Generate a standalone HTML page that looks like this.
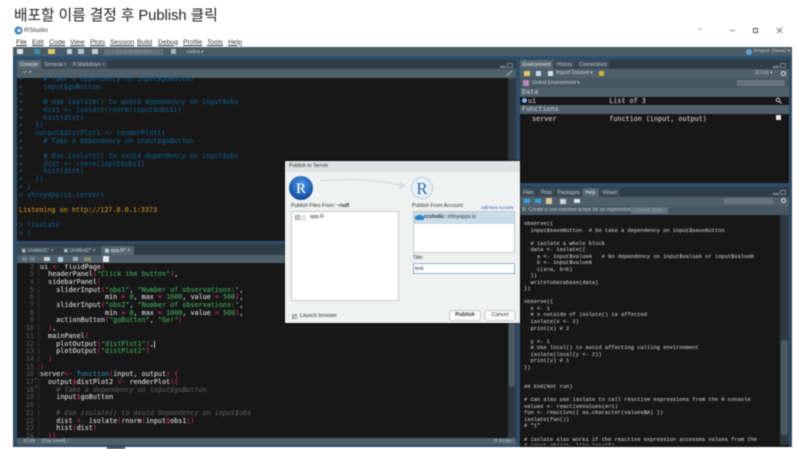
<!DOCTYPE html>
<html lang="ko"><head><meta charset="utf-8"><title>배포할 이름 결정 후 Publish 클릭</title>
<style>
*{margin:0;padding:0;box-sizing:border-box}
html,body{width:800px;height:449px;overflow:hidden;background:#fff}
#r{position:absolute;left:0;top:0;width:800px;height:449px;overflow:hidden;filter:blur(.4px);font-family:"Liberation Sans",sans-serif}
#r div,#r span.a,#r pre,#r svg{position:absolute}
pre{font-family:"DejaVu Sans Mono","Liberation Mono",monospace;font-size:6.75px;line-height:7.7px;white-space:pre;-webkit-text-stroke:.12px currentColor}
.t{font-size:5.5px;color:#c9d0d4;white-space:nowrap}
.m{font-size:6.8px;color:#333;top:38.5px;white-space:nowrap;text-decoration:underline;text-decoration-thickness:.3px}
.tab{top:0;height:9px;background:#3a4a55;font-size:5px;color:#c3cbd0;line-height:10px;text-align:center;white-space:nowrap}
.on{background:#55666f;color:#e4e8ea}
.st{color:#3fa45a}.fn{color:#2a89a8}.b{color:#c42b6a}.c{color:#5a5a5a;font-style:italic}.o{color:#c42b6a}
</style></head><body><div id="r">
<div style="left:14px;top:6px;font:14.7px/20px 'Liberation Sans','Noto Sans CJK KR',sans-serif;color:#222;white-space:nowrap">배포할 이름 결정 후 Publish 클릭</div>
<svg style="left:14px;top:26px" width="9" height="9"><circle cx="4.5" cy="4.5" r="4" fill="#3d82c4"/><circle cx="5" cy="4.5" r="1.7" fill="#dfeaf4"/></svg>
<div style="left:24px;top:26px;font-size:6.7px;line-height:9px;color:#444">RStudio</div>
<div class="m" style="left:16px">File</div><div class="m" style="left:32px">Edit</div><div class="m" style="left:49px">Code</div><div class="m" style="left:70px">View</div><div class="m" style="left:90px">Plots</div><div class="m" style="left:110px">Session</div><div class="m" style="left:137px">Build</div><div class="m" style="left:158px">Debug</div><div class="m" style="left:183px">Profile</div><div class="m" style="left:207px">Tools</div><div class="m" style="left:228px">Help</div>
<div style="left:697px;top:26px;font-size:6px;line-height:7px;color:#333">↔</div>
<div style="left:730px;top:29.5px;width:5px;height:1px;background:#888"></div>
<div style="left:753px;top:28px;width:5px;height:5px;border:1px solid #555"></div>
<svg style="left:776px;top:27px" width="7" height="7"><path d="M1 1L6 6M6 1L1 6" stroke="#555" stroke-width=".8"/></svg>

<!-- window -->
<div style="left:13px;top:47px;width:779px;height:400px;background:#2f4c68"></div>
<div style="left:13px;top:47px;width:779px;height:9px;background:#4c5c66"></div>
<div style="left:13px;top:56px;width:779px;height:1px;background:#2b5580"></div>
<!-- toolbar icons -->
<div style="left:17px;top:49px;width:6px;height:5px;background:#dfe8e4"></div><div style="left:34px;top:49px;width:6px;height:5px;background:#3a8fb4"></div>
<div style="left:48px;top:49px;width:7px;height:5px;background:#e2c56c"></div><div style="left:67px;top:49px;width:5px;height:5px;background:#b9d2ea"></div><div style="left:78px;top:49px;width:6px;height:5px;background:#a9c4dc"></div><div style="left:92px;top:49px;width:6px;height:5px;background:#c8ccd0"></div>
<div style="left:104px;top:49px;width:59px;height:6px;background:#62717b"></div>
<div class="t" style="left:116px;top:49px;color:#8e9aa2;font-size:4.6px;line-height:6px">Go to file/function</div>
<div style="left:171px;top:49px;width:5px;height:5px;background:#a8b2b8"></div>
<div class="t" style="left:186px;top:49px;font-size:4.6px;line-height:6px">Addins ▾</div>
<div style="left:746px;top:48.5px;width:6px;height:6px;border-radius:3px;background:#5aa2d6"></div>
<div class="t" style="left:754px;top:49px;font-size:4.8px;line-height:6px">Project: (None) ▾</div>

<!-- left top pane -->
<div style="left:17px;top:60px;width:499px;height:181px;background:#2f3d47"></div>
<div style="left:17px;top:60px;width:499px;height:9px"><div class="tab on" style="left:0;width:24px">Console</div><div class="tab" style="left:24px;width:29px">Terminal ×</div><div class="tab" style="left:53px;width:38px">R Markdown ×</div></div>
<div style="left:17px;top:69px;width:499px;height:9px;background:#4f606a"></div>
<div class="t" style="left:22px;top:70px;font-size:5px;line-height:7px">~/ ⬏</div>
<div style="left:500px;top:66px;width:6px;height:2px;background:#76848c"></div><div style="left:507px;top:63px;width:6px;height:5px;border:1px solid #76848c"></div>
<svg style="left:505px;top:70px" width="9" height="7"><path d="M1 6L7 1" stroke="#9aa6ac" stroke-width="1.3"/></svg>
<div style="left:17px;top:78px;width:491px;height:163px;background:#171717;overflow:hidden"></div>
<div style="left:508px;top:78px;width:8px;height:163px;background:#2d3a43"></div>
<pre style="left:19px;top:76px;color:#115a85">+     # Take a dependency on input$goButton
+     input$goButton
+
+     # Use isolate() to avoid dependency on input$obs
+     dist &lt;- isolate(rnorm(input$obs1))
+     hist(dist)
+   })
+   output$distPlot1 &lt;- renderPlot({
+     # Take a dependency on input$goButton
+
+     # Use isolate() to avoid dependency on input$obs
+     dist &lt;- rnorm(input$obs1)
+     hist(dist)
+   })
+ }
&gt; shinyApp(ui,server)

<span style="color:#c08a22">Listening on http://127.0.0.1:3373</span>

&gt; ?isolate
&gt; |</pre>

<!-- editor -->
<div style="left:17px;top:244px;width:499px;height:201px;background:#2f3d47"></div>
<div style="left:17px;top:246px;width:499px;height:9px"><div class="tab" style="left:0;width:41px">▣ Untitled1* ×</div><div class="tab" style="left:42px;width:41px">▣ Untitled2* ×</div><div class="tab on" style="left:84px;width:33px">▣ app.R* ×</div></div>
<div style="left:17px;top:255px;width:499px;height:8px;background:#4f606a"></div>
<div style="left:22px;top:257px;width:5px;height:4px;background:#6f8290"></div><div style="left:30px;top:257px;width:5px;height:4px;background:#6f8290"></div><div style="left:44px;top:257px;width:6px;height:4px;background:#c8d0d4"></div><div style="left:58px;top:257px;width:5px;height:5px;background:#a8c8e4"></div><div style="left:73px;top:257px;width:5px;height:4px;background:#9db0bc"></div><div style="left:84px;top:257px;width:7px;height:4px;background:#8a8a6a"></div><div style="left:103px;top:256px;width:6px;height:6px;background:#e4e8ea"></div>
<div style="left:17px;top:263px;width:491px;height:175px;background:#171717"></div>
<div style="left:508px;top:263px;width:8px;height:175px;background:#2d3a43"></div>
<div style="left:509px;top:263px;width:6px;height:124px;background:#4a5a64;border-radius:3px"></div>
<div style="left:38px;top:263px;width:1px;height:175px;background:#2c2c2c"></div>
<pre style="left:17px;top:263.5px;width:17px;text-align:right;color:#4f5559">2
3
4
5
6
7
8
9
10
11
12
13
14
15
16
17
18
19
20
21
22
23
24</pre>
<div style="left:35px;top:376px;font-size:4px;line-height:5px;color:#777">▾</div>
<div style="left:35px;top:384px;font-size:4px;line-height:5px;color:#777">▾</div>
<div style="left:154px;top:341px;width:.7px;height:7px;background:#ccc"></div>
<pre style="left:40px;top:263.5px;height:174.5px;overflow:hidden;color:#d4d4d4">ui <span class="o">&lt;-</span> fluidPage<span class="b">(</span>
  headerPanel<span class="b">(</span><span class="st">"Click the button"</span><span class="b">)</span>,
  sidebarPanel<span class="b">(</span>
    sliderInput<span class="b">(</span><span class="st">"obs1"</span>, <span class="st">"Number of observations:"</span>,
                min <span class="o">=</span> <span class="st">0</span>, max <span class="o">=</span> <span class="st">1000</span>, value <span class="o">=</span> <span class="st">500</span><span class="b">)</span>,
    sliderInput<span class="b">(</span><span class="st">"obs2"</span>, <span class="st">"Number of observations:"</span>,
                min <span class="o">=</span> <span class="st">0</span>, max <span class="o">=</span> <span class="st">1000</span>, value <span class="o">=</span> <span class="st">500</span><span class="b">)</span>,
    actionButton<span class="b">(</span><span class="st">"goButton"</span>, <span class="st">"Go!"</span><span class="b">)</span>
  <span class="b">)</span>,
  mainPanel<span class="b">(</span>
    plotOutput<span class="b">(</span><span class="st">"distPlot1"</span><span class="b">)</span>,
    plotOutput<span class="b">(</span><span class="st">"distPlot2"</span><span class="b">)</span>
  <span class="b">)</span>
<span class="b">)</span>
server<span class="o">&lt;-</span> <span class="fn">function</span><span class="b">(</span>input, output<span class="b">)</span> <span class="b">{</span>
  output<span class="o">$</span>distPlot2 <span class="o">&lt;-</span> renderPlot<span class="b">({</span>
    <span class="c"># Take a dependency on input$goButton</span>
    input<span class="o">$</span>goButton

    <span class="c"># Use isolate() to avoid dependency on input$obs</span>
    dist <span class="o">&lt;-</span> isolate<span class="b">(</span>rnorm<span class="b">(</span>input<span class="o">$</span>obs1<span class="b">))</span>
    hist<span class="b">(</span>dist<span class="b">)</span>
  <span class="b">})</span></pre>
<div style="left:17px;top:438px;width:499px;height:7px;background:#4f606a"></div>
<div class="t" style="left:23px;top:438px;font-size:4.8px;line-height:7px">12:29</div>
<div class="t" style="left:42px;top:438px;font-size:4.8px;line-height:7px">(Top Level) ⁝</div>
<div class="t" style="left:494px;top:438px;font-size:4.8px;line-height:7px">R Script ⁝</div>
<div style="left:107px;top:447px;width:18px;height:2px;background:#555"></div>

<!-- env pane -->
<div style="left:520px;top:60px;width:269px;height:123px;background:#171717"></div>
<div style="left:520px;top:60px;width:269px;height:9px;background:#2f3d47"><div class="tab on" style="left:0;width:33px">Environment</div><div class="tab" style="left:33px;width:23px">History</div><div class="tab" style="left:57px;width:32px">Connections</div></div>
<div style="left:773px;top:66px;width:6px;height:2px;background:#76848c"></div><div style="left:780px;top:63px;width:6px;height:5px;border:1px solid #76848c"></div>
<div style="left:520px;top:69px;width:269px;height:9px;background:#4f606a"></div>
<div style="left:524px;top:71px;width:6px;height:5px;background:#e2c56c"></div><div style="left:536px;top:71px;width:5px;height:5px;background:#c4dcf0"></div>
<div style="left:548px;top:71px;width:5px;height:5px;background:#cfe4dc"></div>
<div class="t" style="left:556px;top:70px;font-size:5px;line-height:7px">Import Dataset ▾</div>
<div style="left:599px;top:71px;width:5px;height:5px;background:#d8b040"></div>
<div class="t" style="left:755px;top:70px;font-size:5px;line-height:7px">☰ List ▾</div>
<div style="left:781px;top:71px;width:5px;height:5px;border:1.2px solid #dfe4e6;border-radius:3px"></div>
<div style="left:520px;top:78px;width:269px;height:10px;background:#465761"></div>
<div style="left:523px;top:80px;width:6px;height:6px;background:#b88ac0"></div>
<div class="t" style="left:532px;top:80px;font-size:5px;line-height:6px">Global Environment ▾</div>
<div style="left:737px;top:80px;width:48px;height:6px;background:#65747d"></div>
<pre style="left:520px;top:88px;padding-left:2px;color:#b7c0c5;background:#4f606a;width:269px;height:9px;line-height:9px">Data</pre>
<div style="left:522px;top:98px;width:5px;height:5px;border-radius:3px;background:#7ab4e4"></div>
<pre style="left:528px;top:97px;color:#c8c8c8;line-height:8px">ui                  List of 3</pre>
<pre style="left:520px;top:105px;padding-left:2px;color:#b7c0c5;background:#4f606a;width:269px;height:9px;line-height:9px">Functions</pre>
<pre style="left:528px;top:115px;color:#c8c8c8;line-height:8px"> server             function (input, output)</pre>
<svg style="left:775px;top:97px" width="7" height="7"><circle cx="3" cy="3" r="1.8" fill="none" stroke="#ccc"/><path d="M4.5 4.5L6.5 6.5" stroke="#ccc"/></svg>
<div style="left:776px;top:115px;width:5px;height:5px;background:#eee"></div>

<!-- help pane -->
<div style="left:520px;top:187px;width:269px;height:260px;background:#171717"></div>
<div style="left:520px;top:187px;width:269px;height:10px;background:#2f3d47"></div>
<div style="left:520px;top:188px;width:269px;height:9px"><div class="tab" style="left:0;width:17px">Files</div><div class="tab" style="left:18px;width:17px">Plots</div><div class="tab" style="left:36px;width:25px">Packages</div><div class="tab on" style="left:62px;width:17px">Help</div><div class="tab" style="left:80px;width:20px">Viewer</div></div>
<div style="left:773px;top:193px;width:6px;height:2px;background:#76848c"></div><div style="left:780px;top:190px;width:6px;height:5px;border:1px solid #76848c"></div>
<div style="left:520px;top:197px;width:269px;height:9px;background:#4f606a"></div>
<div style="left:524px;top:199px;width:6px;height:4px;background:#3aa0e0"></div><div style="left:535px;top:199px;width:6px;height:4px;background:#3aa0e0"></div><div style="left:546px;top:198px;width:6px;height:6px;background:#d8c8a0"></div><div style="left:560px;top:199px;width:6px;height:5px;background:#ccd2d6"></div><div style="left:574px;top:199px;width:6px;height:4px;background:#dfe4e6"></div>
<div style="left:724px;top:198px;width:49px;height:6px;background:#65747d"></div>
<div style="left:781px;top:198px;width:5px;height:5px;border:1.2px solid #dfe4e6;border-radius:3px"></div>
<div style="left:520px;top:206px;width:269px;height:9px;background:#465761"></div>
<div class="t" style="left:522px;top:207px;font-size:5px;line-height:7px">R: Create a non-reactive scope for an expression ▾</div>
<div class="t" style="left:631px;top:207px;width:37px;height:7px;background:#65747d;color:#99a4ab;font-size:4.8px;line-height:7px;text-align:center">Find in Topic</div>
<div style="left:780px;top:215px;width:9px;height:230px;background:#2d3a43"></div>
<div style="left:781px;top:340px;width:7px;height:95px;background:#4a5a64;border-radius:3px"></div>
<pre style="left:524px;top:221px;height:224px;overflow:hidden;font-family:'Liberation Mono',monospace;font-size:5.4px;line-height:6.53px;color:#bdbdbd">observe({
  input$saveButton  # Do take a dependency on input$saveButton

  # isolate a whole block
  data &lt;- isolate({
    a &lt;- input$valueA   # No dependency on input$valueA or input$valueB
    b &lt;- input$valueB
    c(a=a, b=b)
  })
  writeToDatabase(data)
})

observe({
  x &lt;- 1
  # x outside of isolate() is affected
  isolate(x &lt;- 2)
  print(x) # 2

  y &lt;- 1
  # Use local() to avoid affecting calling environment
  isolate(local(y &lt;- 2))
  print(y) # 1
})


## End(Not run)

# Can also use isolate to call reactive expressions from the R console
values &lt;- reactiveValues(A=1)
fun &lt;- reactive({ as.character(values$A) })
isolate(fun())
# "1"

# isolate also works if the reactive expression accesses values from the
# input object, like input$x</pre>

<!-- dialog -->
<div style="left:285px;top:161px;width:235px;height:162px;background:#f0f2f2;box-shadow:0 0 2px #000"></div>
<div style="left:285px;top:161px;width:235px;height:11px;background:#dfe3e4"></div>
<div style="left:289px;top:161px;font-size:5.2px;line-height:11px;color:#333">Publish to Server</div>
<svg style="left:288px;top:175px" width="26" height="26"><defs><radialGradient id="g" cx=".5" cy=".35" r=".7"><stop offset="0" stop-color="#4d9be8"/><stop offset="1" stop-color="#0c3f94"/></radialGradient></defs><circle cx="13" cy="13" r="12" fill="url(#g)"/><text x="13" y="18" text-anchor="middle" font-family="Liberation Serif" font-size="15" fill="#fff">R</text></svg>
<svg style="left:318px;top:176px" width="90" height="14"><path d="M2 5Q45 1 82 9" stroke="#dfe3e6" stroke-width="2" fill="none"/><path d="M82 5L88 10L81 13Z" fill="#d6dbe0"/></svg>
<svg style="left:410px;top:176px" width="24" height="24"><circle cx="12" cy="12" r="10.5" fill="#eaf1f6" stroke="#b8d2e4" stroke-width="2" stroke-dasharray="1.5 1"/><text x="12" y="18" text-anchor="middle" font-family="Liberation Serif" font-size="17" fill="#2f6ea8">R</text></svg>
<div style="left:291px;top:203px;font-size:5.2px;line-height:7px;color:#333;white-space:nowrap">Publish Files From: <b>~/sdf</b></div>
<div style="left:291px;top:211px;width:108px;height:90px;background:#fff;border:1px solid #c4c8ca"></div>
<div style="left:294.5px;top:214.500px;width:5px;height:5px;background:#fff;border:.6px solid #999;font-size:5px;line-height:4px;color:#333">✓</div>
<div style="left:301px;top:215px;width:5px;height:6px;background:#dde6ee;border-radius:1px"></div>
<div style="left:310px;top:214px;font-size:5.2px;line-height:7px;color:#333">app.R</div>
<div style="left:412px;top:203px;font-size:5.2px;line-height:7px;color:#333">Publish From Account:</div>
<div style="left:481px;top:204px;font-size:4.1px;line-height:7px;color:#3b45b8;white-space:nowrap">Add New Account</div>
<div style="left:412.500px;top:211px;width:102px;height:42px;background:#fff;border:1px solid #c4c8ca"></div>
<div style="left:413.500px;top:212px;width:100px;height:11.500px;background:#c9dcea"></div>
<svg style="left:415px;top:213px" width="9" height="8"><path d="M1 7a2 2 0 0 1 1-4a3 3 0 0 1 5 0a2 2 0 0 1 1 4Z" fill="#2b86c4"/></svg>
<div style="left:424px;top:214px;font-size:5.2px;line-height:7px;color:#333;white-space:nowrap"><b>rcoholic:</b> shinyapps.io</div>
<div style="left:412.500px;top:255px;font-size:5.2px;line-height:7px;color:#333">Title:</div>
<div style="left:412.500px;top:263px;width:102px;height:10.500px;background:#fff;border:1px solid #8fb2cf"></div>
<div style="left:415px;top:264.500px;font-size:5.2px;line-height:8px;color:#333">test</div>
<div style="left:291.500px;top:313.500px;width:5px;height:5px;background:#f8f8f8;border:.6px solid #999;font-size:5px;line-height:4px;color:#333">✓</div>
<div style="left:300px;top:313px;font-size:5.2px;line-height:7px;color:#333">Launch browser</div>
<div style="left:449px;top:310px;width:32px;height:11px;background:#fafafa;border:.7px solid #c4c8ca;border-radius:3px;font-size:5.4px;line-height:9.5px;text-align:center;color:#333;font-weight:bold">Publish</div>
<div style="left:484px;top:310px;width:32px;height:11px;background:#fafafa;border:.7px solid #c4c8ca;border-radius:3px;font-size:5.4px;line-height:9.5px;text-align:center;color:#333">Cancel</div>
</div></body></html>
